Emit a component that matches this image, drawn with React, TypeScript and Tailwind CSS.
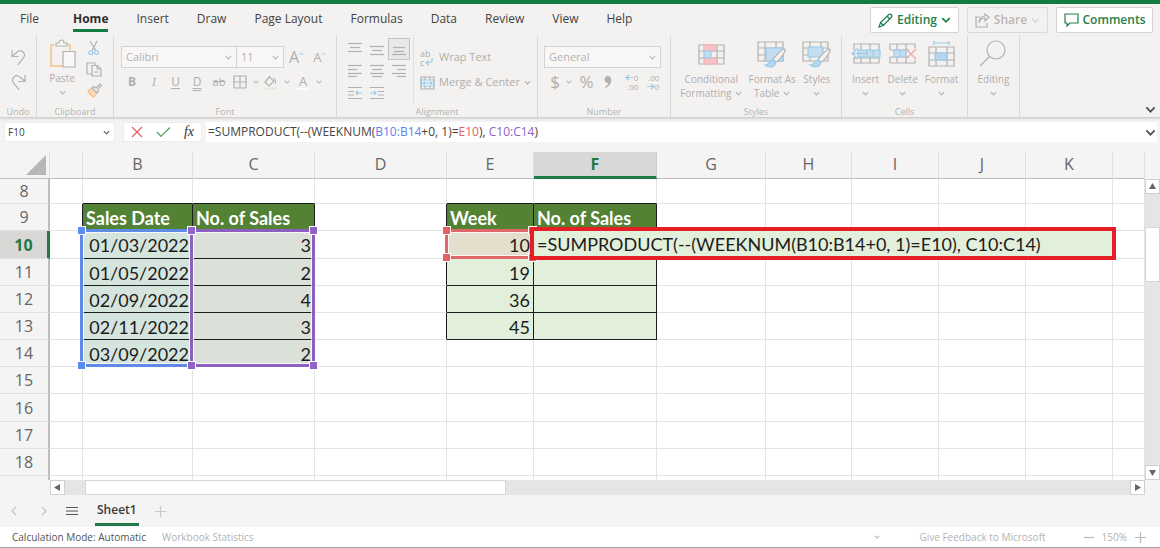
import React from 'react';

const GRAY = '#b3b1af';
const BLUE = '#9cc9e8';

const Svg = ({ w, h, children, stroke = GRAY }: { w: number; h: number; children: React.ReactNode; stroke?: string }) => (
  <svg width={w} height={h} viewBox={`0 0 ${w} ${h}`} fill="none" stroke={stroke} strokeWidth="1.2" className="shrink-0" aria-hidden="true">
    {children}
  </svg>
);

const Chevron = ({ size = 7, color = '#b7b5b3' }: { size?: number; color?: string }) => (
  <svg width={size} height={size} viewBox="0 0 8 8" fill="none" stroke={color} strokeWidth="1.4" className="shrink-0" aria-hidden="true">
    <path d="M1 2.5 L4 5.5 L7 2.5" />
  </svg>
);

const Lines = ({ rows }: { rows: [number, number, number][] }) => (
  <Svg w={14} h={14}>
    {rows.map(([x1, x2, y]) => (
      <path key={y} d={`M${x1} ${y} H${x2}`} />
    ))}
  </Svg>
);

type GroupProps = { label: string; className: string; children: React.ReactNode };

const Group = ({ label, className, children }: GroupProps) => (
  <section className={`flex shrink-0 flex-col border-r border-[#dad8d6] ${className}`}>
    <div className="flex h-[68px] justify-center">{children}</div>
    <div className="h-3 pt-px text-center text-[9px] leading-[14px] text-[#b4b2b0]">{label}</div>
  </section>
);

const BigButton = ({ lines, children, className = '' }: { lines: string[]; children: React.ReactNode; className?: string }) => (
  <button type="button" className={`flex flex-col items-center whitespace-nowrap text-[10px] leading-[14px] text-[#b0aeac] ${className}`}>
    <span className="flex h-9 items-center justify-center">{children}</span>
    <span>{lines[0]}</span>
    <span className="flex h-[14px] items-center gap-1">
      {lines[1]}
      <Chevron />
    </span>
  </button>
);

const IconButton = ({ label, children, className = '' }: { label: string; children: React.ReactNode; className?: string }) => (
  <button type="button" aria-label={label} className={`flex shrink-0 items-center justify-center ${className}`}>
    {children}
  </button>
);

const Dropdown = ({ label, value, className }: { label: string; value: string; className: string }) => (
  <label className={`relative flex h-[22px] items-center border border-[#d6d4d2] bg-[#f8f7f6] ${className}`}>
    <select aria-label={label} className="h-full w-full appearance-none bg-transparent pl-1 text-[11px] text-[#b4b2b0] outline-none">
      <option>{value}</option>
    </select>
    <span className="pointer-events-none absolute right-1">
      <Chevron />
    </span>
  </label>
);

const GridLines = () => <path d="M1 1 H26 V20 H1 Z M1 7 H26 M1 14 H26 M8 1 V20 M19 1 V20" />;

const Brush = () => (
  <>
    <path d="M28 8 C25 8 17 16 16 19 L19 21 C22 20 29 11 28 8 Z" fill="#f3f2f1" />
    <path d="M16 19 C12 19 13 24 8 24 C12 27 18 27 19 21 Z" fill="#b5d7ee" stroke={BLUE} />
  </>
);

const TABS = ['File', 'Home', 'Insert', 'Draw', 'Page Layout', 'Formulas', 'Data', 'Review', 'View', 'Help'];

const MenuBar = () => (
  <header className="flex h-8 items-start justify-between pl-5 pr-[7px]">
    <nav className="flex gap-7 text-[12px] leading-[30px] text-[#444240]">
      {TABS.map((tab) => (
        <a
          key={tab}
          href={`#${tab}`}
          className={tab === 'Home' ? 'ml-[6px] h-7 border-b-3 border-[#107c41] font-bold text-[#302f2e]' : 'h-7'}
        >
          {tab}
        </a>
      ))}
    </nav>
    <div className="flex gap-2 pt-[3px] text-[12px] font-semibold">
      <button type="button" className="flex h-[26px] w-[89px] items-center justify-center gap-1 rounded-xs border border-[#d5d3d1] bg-white text-[#1f8049]">
        <Svg w={15} h={15} stroke="#1f8049">
          <path d="M1 14 L2.5 9.5 L10.5 1.8 C12.5 0 15 2.5 13.2 4.5 L5.3 12.5 Z M2.5 9.5 L5.3 12.5 M9 3.3 L11.8 6" />
        </Svg>
        Editing
        <Chevron size={10} color="#1f8049" />
      </button>
      <button type="button" disabled className="flex h-[26px] w-[81px] items-center justify-center gap-1 rounded-xs border border-[#dcdad8] text-[#b9b7b5]">
        <Svg w={15} h={15}>
          <path d="M5 4 H1 V14 H12 V10 M4 10 C5 6 7 5 10 5 V8 L14 4 L10 1 V3 C6 3 4 6 4 10 Z" />
        </Svg>
        Share
        <Chevron size={9} color="#d5d3d1" />
      </button>
      <button type="button" className="flex h-[26px] w-[97px] items-center justify-center gap-1 rounded-xs border border-[#d5d3d1] bg-white text-[#1f8049]">
        <Svg w={15} h={14} stroke="#1f8049">
          <path d="M1 1 H14 V10 H6 L3 13 V10 H1 Z" />
        </Svg>
        Comments
      </button>
    </div>
  </header>
);

const ClipboardGroup = () => (
  <Group label="Clipboard" className="w-[77px]">
    <div className="flex gap-[10px]">
      <button type="button" className="flex flex-col items-center pt-px text-[10px] leading-[14px] text-[#b0aeac]">
        <Svg w={28} h={34}>
          <path d="M6 8 H3 V29 H15 M18 8 H22 V13" stroke="#f3cf9f" strokeWidth="2" />
          <path d="M8 9 V6 H11 C11 2 16 2 16 6 H19 V9 Z M15 14.5 H27 V30 H15 Z" fill="#f8f7f6" />
        </Svg>
        Paste
        <span className="mt-1">
          <Chevron />
        </span>
      </button>
      <div className="flex flex-col items-center gap-[6px] pt-[5px]">
        <IconButton label="Cut">
          <Svg w={12} h={15}>
            <path d="M2 0 L8 10 M9 0 L4 10" />
            <circle cx="2.8" cy="11.5" r="2" stroke={BLUE} />
            <circle cx="8.5" cy="11.5" r="2" stroke={BLUE} />
          </Svg>
        </IconButton>
        <IconButton label="Copy">
          <Svg w={16} h={15}>
            <path d="M6 12 H1 V1 H9 V3 M6 3.5 H11 L15 7 V14 H6 Z M11 3.5 V7 H15 M8.5 10 H12.5" />
          </Svg>
        </IconButton>
        <IconButton label="Format Painter">
          <Svg w={15} h={15}>
            <path d="M1 8 L5 5 L10 10 L7 14 C5 13 2 11 1 8 Z" stroke="#efc08b" fill="#f7dcbc" />
            <path d="M5 5 L7 3.5 L9 5 L13 1 L14.5 2.5 L10.5 6.5 L11.5 8.5 L10 10 Z" fill="#f3f2f1" />
          </Svg>
        </IconButton>
      </div>
    </div>
  </Group>
);

const FontGroup = () => (
  <Group label="Font" className="w-[223px]">
    <div className="flex w-full flex-col gap-[2px] pl-[7px] pt-[10px] text-[#b0aeac]">
      <div className="flex items-center">
        <Dropdown label="Font" value="Calibri" className="w-[116px]" />
        <Dropdown label="Font size" value="11" className="w-[47px] border-l-0" />
        <IconButton label="Grow font" className="ml-[5px] h-5 text-[16px] leading-5">
          A
          <svg width="5" height="10" viewBox="0 0 5 10" fill="none" stroke={BLUE}><path d="M0.5 3 L2.5 1 L4.5 3" /></svg>
        </IconButton>
        <IconButton label="Shrink font" className="ml-[9px] h-5 text-[13px] leading-5">
          A
          <svg width="5" height="10" viewBox="0 0 5 10" fill="none" stroke={BLUE}><path d="M0.5 1 L2.5 3 L4.5 1" /></svg>
        </IconButton>
      </div>
      <div className="flex h-6 items-center text-[12px]">
        <button type="button" className="w-[22px] font-bold">B</button>
        <button type="button" className="w-[22px] font-serif italic">I</button>
        <button type="button" className="w-[21px] underline underline-offset-2">U</button>
        <button type="button" className="w-[22px] underline decoration-double underline-offset-2">D</button>
        <button type="button" className="w-[22px] text-[11px] line-through">ab</button>
        <IconButton label="Borders" className="w-[31px] gap-[6px]">
          <Svg w={14} h={14}>
            <path d="M1 1 H13 V13 H1 Z M7 1 V13 M1 7 H13" />
          </Svg>
          <Chevron size={6} />
        </IconButton>
        <IconButton label="Fill colour" className="w-8 gap-[6px]">
          <Svg w={14} h={15}>
            <path d="M6 1 L1 7 L5 11 L10 6 L5 2" />
            <path d="M9 3 C12 4 12 6 11.5 9" stroke={BLUE} />
            <path d="M0 13.5 H13" stroke="#e2ecdd" strokeWidth="2" />
          </Svg>
          <Chevron size={6} />
        </IconButton>
        <IconButton label="Font colour" className="w-8 gap-[6px]">
          <span className="w-[14px] border-b-2 border-[#fbfbfb] text-[13px] leading-[14px]">A</span>
          <Chevron size={6} />
        </IconButton>
      </div>
    </div>
  </Group>
);

const ALIGNMENTS: { name: string; rows: [number, number, number][] }[] = [
  { name: 'Top align', rows: [[0, 14, 1.5], [2, 12, 5.5], [0, 14, 9.5]] },
  { name: 'Middle align', rows: [[0, 14, 4.5], [2, 12, 8.5], [0, 14, 12.5]] },
  { name: 'Bottom align', rows: [[1, 13, 5.5], [2, 12, 9.5], [0, 14, 12.5]] },
  { name: 'Align left', rows: [[0, 14, 1.5], [0, 9, 5.5], [0, 14, 9.5], [0, 9, 12.5]] },
  { name: 'Centre', rows: [[0, 14, 1.5], [2, 12, 5.5], [0, 14, 9.5], [2, 12, 12.5]] },
  { name: 'Align right', rows: [[0, 14, 1.5], [5, 14, 5.5], [0, 14, 9.5], [5, 14, 12.5]] },
];

const AlignmentGroup = () => (
  <Group label="Alignment" className="w-[201px]">
    <div className="flex w-full">
      <div className="grid w-[77px] grid-cols-[22px_22px_22px] grid-rows-[22px_22px_22px] border-r border-[#e2e0de] pl-[7px] pt-[2px]">
        {ALIGNMENTS.map(({ name, rows }) => (
          <IconButton key={name} label={name} className={name === 'Bottom align' ? 'border border-[#c6c4c2] bg-[#e9e8e7]' : ''}>
            <Lines rows={rows} />
          </IconButton>
        ))}
        <IconButton label="Decrease indent">
          <Svg w={14} h={14}>
            <path d="M0 1.5 H14 M0 5.5 H6 M0 9 H6 M0 12.5 H14" />
            <path d="M14 7 H8 M10 5 L8 7 L10 9" stroke={BLUE} />
          </Svg>
        </IconButton>
        <IconButton label="Increase indent">
          <Svg w={14} h={14}>
            <path d="M0 1.5 H14 M8 5.5 H14 M8 9 H14 M0 12.5 H14" />
            <path d="M0 7 H6 M4 5 L6 7 L4 9" stroke={BLUE} />
          </Svg>
        </IconButton>
      </div>
      <div className="flex flex-col gap-[2px] pl-[6px] pt-[10px] text-[11px] text-[#b0aeac]">
        <button type="button" className="flex h-[23px] items-center gap-1 whitespace-nowrap">
          <span className="flex w-[15px] flex-col items-start text-[9px] leading-[9px]">
            <span>ab</span>
            <span className="flex items-center gap-px">
              c
              <svg width="8" height="8" viewBox="0 0 8 8" fill="none" stroke={BLUE} strokeWidth="1.2" aria-hidden="true">
                <path d="M7 0 C8 4 5 5 1 5 M3.5 2.5 L1 5 L3.5 7.5" />
              </svg>
            </span>
          </span>
          Wrap Text
        </button>
        <button type="button" className="flex h-[23px] items-center gap-1 whitespace-nowrap">
          <Svg w={15} h={14}>
            <path d="M1 1 H14 V13 H1 Z M5 1 V4 M10 1 V4 M5 10 V13 M10 10 V13" />
            <path d="M1 4 H14 V10 H1 Z M3 7 H12 M5 5.5 L3 7 L5 8.5 M10 5.5 L12 7 L10 8.5" stroke={BLUE} />
          </Svg>
          Merge &amp; Center
          <Chevron />
        </button>
      </div>
    </div>
  </Group>
);

const NumberGroup = () => (
  <Group label="Number" className="w-[133px]">
    <div className="flex w-full flex-col gap-[2px] px-[6px] pt-[10px] text-[#b0aeac]">
      <Dropdown label="Number format" value="General" className="w-[117px]" />
      <div className="flex h-6 items-center text-[17px]">
        <IconButton label="Currency" className="w-[34px] gap-[6px]">
          <span>$</span>
          <Chevron size={6} />
        </IconButton>
        <button type="button" className="w-[17px]">%</button>
        <IconButton label="Comma style" className="w-[26px]">
          <svg width="8" height="14" viewBox="0 0 8 14" fill={GRAY} aria-hidden="true">
            <path d="M3.8 1 C6 1 7.3 2.7 7.3 5 C7.3 8.5 5 11.5 1.6 13 L1 12 C3 10.8 4 9.5 4.2 8 C2.2 8.2 0.6 6.8 0.6 4.6 C0.6 2.5 2 1 3.8 1 Z" />
          </svg>
        </IconButton>
        <IconButton label="Increase decimal" className="w-[21px]">
          <span className="flex flex-col items-end text-[8px] leading-[9px]">
            <span className="flex items-center">
              <svg width="9" height="7" viewBox="0 0 9 7" fill="none" stroke={BLUE} strokeWidth="1.2"><path d="M8 3.5 H1 M4 1 L1 3.5 L4 6" /></svg>
              0
            </span>
            <span>.00</span>
          </span>
        </IconButton>
        <IconButton label="Decrease decimal" className="w-[21px]">
          <span className="flex flex-col items-end text-[8px] leading-[9px]">
            <span>.00</span>
            <span className="flex items-center">
              <svg width="9" height="7" viewBox="0 0 9 7" fill="none" stroke={BLUE} strokeWidth="1.2"><path d="M1 3.5 H8 M5 1 L8 3.5 L5 6" /></svg>
              0
            </span>
          </span>
        </IconButton>
      </div>
    </div>
  </Group>
);

const StylesGroup = () => (
  <Group label="Styles" className="w-[171px]">
    <div className="flex gap-[6px]">
      <BigButton lines={['Conditional', 'Formatting']}>
        <Svg w={27} h={21}>
          <GridLines />
          <path d="M6 1 H17 V7 H6 Z M6 14 H19 V20 H6 Z" fill="#f6c4c6" stroke="#efafb2" />
          <path d="M6 7 H13 V14 H6 Z" fill="#c2ddf0" stroke={BLUE} />
        </Svg>
      </BigButton>
      <BigButton lines={['Format As', 'Table']}>
        <Svg w={30} h={27}>
          <GridLines />
          <path d="M9 7 H26 V20 H9 Z" fill="#c2ddf0" stroke={BLUE} />
          <Brush />
        </Svg>
      </BigButton>
      <BigButton lines={['Styles', '']}>
        <Svg w={30} h={27}>
          <GridLines />
          <path d="M6 6 H21 V16 H6 Z" fill="#c2ddf0" stroke={BLUE} />
          <Brush />
        </Svg>
      </BigButton>
    </div>
  </Group>
);

const CellsGroup = () => (
  <Group label="Cells" className="w-[126px]">
    <div className="flex gap-[7px]">
      <BigButton lines={['Insert', '']}>
        <Svg w={30} h={22}>
          <path d="M3 7 V1 H28 V7 M3 14 V20 H28 V14 M10 1 V20 M19 1 V20 M3 15 H28" />
          <path d="M7 7 H29 V14 H7 Z M16 7 V14 M22 7 V14" fill="#c2ddf0" stroke={BLUE} />
          <path d="M16 10.5 H1 M7 5 L1 10.5 L7 16" stroke={BLUE} />
        </Svg>
      </BigButton>
      <BigButton lines={['Delete', '']}>
        <Svg w={28} h={22}>
          <path d="M1 7 V1 H26 V5 M1 14 V20 H26 V17 M8 1 V7 M17 1 V7 M8 14 V20 M17 14 V20 M1 7 H20 M1 14 H20" />
          <path d="M5 7 H17 V14 H5 Z M11 7 V14" fill="#c2ddf0" stroke={BLUE} />
          <path d="M17 6 L27 16 M27 6 L17 16" stroke="#f0aaa9" strokeWidth="1.4" />
        </Svg>
      </BigButton>
      <BigButton lines={['Format', '']}>
        <svg width="27" height="26" viewBox="0 -5 27 26" fill="none" stroke={GRAY} strokeWidth="1.2">
          <GridLines />
          <path d="M7 7 H19 V14 H7 Z" fill="#b5d7ee" stroke={BLUE} />
          <path d="M6 -3 H21 M6 -5 V-1 M21 -5 V-1" stroke={BLUE} />
        </svg>
      </BigButton>
    </div>
  </Group>
);

const Ribbon = () => (
  <div className="flex h-[82px] border-b border-[#d2d0ce] shadow-sm">
    <Group label="Undo" className="w-[37px]">
      <div className="flex flex-col gap-[7px] pt-3">
        <IconButton label="Undo">
          <Svg w={17} h={18}>
            <path d="M2 2 V8.5 H8.5 M2 8.5 L7 4 C11 0.5 16 5 14 9 C13 11 10 14 8 17" />
          </Svg>
        </IconButton>
        <IconButton label="Redo">
          <Svg w={17} h={18}>
            <path d="M15 2 V8.5 H8.5 M15 8.5 L10 4 C6 0.5 1 5 3 9 C4 11 7 14 9 17" />
          </Svg>
        </IconButton>
      </div>
    </Group>
    <ClipboardGroup />
    <FontGroup />
    <AlignmentGroup />
    <NumberGroup />
    <StylesGroup />
    <CellsGroup />
    <Group label="" className="w-[52px]">
      <BigButton lines={['Editing', '']}>
        <Svg w={28} h={28}>
          <circle cx="17" cy="10" r="9" />
          <path d="M10.5 16.5 L1 26" />
        </Svg>
      </BigButton>
    </Group>
    <IconButton label="Collapse ribbon" className="mb-[2px] ml-auto mr-1 self-end">
      <Chevron size={11} color="#555" />
    </IconButton>
  </div>
);

const FormulaBar = () => (
  <div className="flex h-[34px] items-start gap-1 pl-1 pr-[4px] pt-1">
    <label className="relative mr-1 flex h-5 w-[111px] items-center border border-[#ececec] bg-white">
      <input aria-label="Name box" defaultValue="F10" className="w-full bg-transparent pl-[3px] text-[10px] text-[#444] outline-none" />
      <span className="absolute right-1">
        <Chevron color="#666" />
      </span>
    </label>
    <div className="flex h-5 w-[79px] items-center justify-between border border-[#ececec] bg-white px-[7px]">
      <IconButton label="Cancel">
        <Svg w={12} h={12} stroke="#e8605c">
          <path d="M1 1 L11 11 M11 1 L1 11" />
        </Svg>
      </IconButton>
      <IconButton label="Enter">
        <Svg w={15} h={12} stroke="#4fa564">
          <path d="M1 6 L5 10.5 L14 1.5" />
        </Svg>
      </IconButton>
      <button type="button" className="font-['Liberation_Serif',serif] text-[14px] italic leading-4 text-[#333]">fx</button>
    </div>
    <div
      role="textbox"
      aria-label="Formula"
      contentEditable
      suppressContentEditableWarning
      className="h-5 flex-1 whitespace-pre bg-white pl-[2px] text-[12px] leading-5 text-[#444] outline-none"
    >
      =SUMPRODUCT(--(WEEKNUM(<span className="text-[#5b82ea]">B10:B14</span>+0, 1)=<span className="text-[#e8605c]">E10</span>), <span className="text-[#8f62c4]">C10:C14</span>)
    </div>
    <IconButton label="Expand formula bar" className="-ml-4 h-5">
      <Chevron size={11} color="#555" />
    </IconButton>
  </div>
);

const COLUMNS = [
  { name: 'A', width: 33 },
  { name: 'B', width: 110 },
  { name: 'C', width: 122 },
  { name: 'D', width: 132 },
  { name: 'E', width: 87 },
  { name: 'F', width: 123 },
  { name: 'G', width: 109 },
  { name: 'H', width: 86 },
  { name: 'I', width: 87 },
  { name: 'J', width: 87 },
  { name: 'K', width: 87 },
  { name: '', width: 0 },
];

const ROWS = [
  { n: 8, height: 25 },
  { n: 9, height: 27 },
  { n: 10, height: 28 },
  { n: 11, height: 27 },
  { n: 12, height: 27 },
  { n: 13, height: 27 },
  { n: 14, height: 27 },
  { n: 15, height: 27 },
  { n: 16, height: 28 },
  { n: 17, height: 27 },
  { n: 18, height: 27 },
];

const CELLS: Record<string, string> = {
  B9: 'Sales Date', C9: 'No. of Sales', E9: 'Week', F9: 'No. of Sales',
  B10: '01/03/2022', B11: '01/05/2022', B12: '02/09/2022', B13: '02/11/2022', B14: '03/09/2022',
  C10: '3', C11: '2', C12: '4', C13: '3', C14: '2',
  E10: '10', E11: '19', E12: '36', E13: '45',
};

const isTable = (col: string, row: number) =>
  (row >= 9 && row <= 14 && (col === 'B' || col === 'C')) || (row >= 9 && row <= 13 && (col === 'E' || col === 'F'));

const cellClass = (index: number, row: number) => {
  const col = COLUMNS[index].name;
  const next = COLUMNS[index + 1]?.name ?? '';
  const inside = isTable(col, row);
  const right = inside || isTable(next, row) ? 'border-r-[#1d1d1d]' : 'border-r-[#e4e4e4]';
  const bottom = inside || isTable(col, row + 1) ? 'border-b-[#1d1d1d]' : 'border-b-[#e4e4e4]';
  let fill = 'bg-white';
  if (inside && row === 9) fill = 'bg-[#548235] text-left font-bold text-white';
  else if (inside && col === 'B') fill = 'bg-[#d5e4dc] text-right';
  else if (inside && col === 'C') fill = 'bg-[#dbe1d9] text-right';
  else if (inside && col === 'E' && row === 10) fill = 'bg-[#e3dfcc] text-right';
  else if (inside) fill = 'bg-[#e2efda] text-right';
  return `border-b border-r px-[3px] pt-px whitespace-nowrap ${right} ${bottom} ${fill}`;
};

const Handles = ({ color }: { color: string }) => (
  <>
    {['-left-[6px] -top-[6px]', '-right-[6px] -top-[6px]', '-left-[6px] -bottom-[6px]', '-right-[6px] -bottom-[6px]'].map((pos) => (
      <span key={pos} className={`absolute size-[9px] border border-white ${color} ${pos}`} />
    ))}
  </>
);

const Sheet = () => (
  <div className="relative min-w-0 flex-1 overflow-hidden">
    <table className="w-full table-fixed border-separate border-spacing-0 font-[Lato,sans-serif] text-[18px] leading-6 text-[#1c1c1c]">
      <colgroup>
        <col style={{ width: 50 }} />
        {COLUMNS.map((c) => (
          <col key={c.name} style={c.width ? { width: c.width } : undefined} />
        ))}
      </colgroup>
      <thead className="font-['Open_Sans',sans-serif] text-[16px] text-[#666]">
        <tr className="h-[27px]">
          <th className="border-b border-r border-b-[#bdbdbd] border-r-[#e0e0e0]" aria-label="Select all">
            <svg width="20" height="20" viewBox="0 0 20 20" className="ml-auto mr-[3px]" aria-hidden="true">
              <path d="M20 0 V20 H0 Z" fill="#b7b7b7" />
            </svg>
          </th>
          {COLUMNS.map(({ name }) => (
            <th
              key={name}
              scope="col"
              className={
                name === 'F'
                  ? 'border-b-3 border-r border-b-[#1f7a46] border-r-[#cfcfcf] bg-[#d9d8d7] leading-5 font-bold text-[#1f7a46]'
                  : 'border-b border-r border-b-[#bdbdbd] border-r-[#e0e0e0] pb-[2px] leading-5 font-normal'
              }
            >
              {name === 'A' ? '' : name}
            </th>
          ))}
        </tr>
      </thead>
      <tbody>
        {ROWS.map(({ n, height }) => (
          <tr key={n} style={{ height }}>
            <th
              scope="row"
              className={
                n === 10
                  ? "border-b border-r-3 border-b-[#e0e0e0] border-r-[#1f7a46] bg-[#d9d8d7] font-['Open_Sans',sans-serif] text-[16px] font-bold text-[#1f7a46]"
                  : "border-b border-r-2 border-b-[#e0e0e0] border-r-[#bdbdbd] font-['Open_Sans',sans-serif] text-[16px] font-normal text-[#666]"
              }
            >
              {n}
            </th>
            {COLUMNS.map(({ name }, i) => (
              <td key={name} className={cellClass(i, n)}>
                {CELLS[`${name}${n}`]}
              </td>
            ))}
          </tr>
        ))}
        <tr className="h-1">
          <th className="border-r-2 border-[#bdbdbd]" />
          {COLUMNS.map(({ name }) => (
            <td key={name} className="border-r border-[#e4e4e4] bg-white" />
          ))}
        </tr>
      </tbody>
    </table>

    {/* range highlights for the references in the formula */}
    <div className="absolute left-[80px] top-[77px] h-[138px] w-[113px] border-3 border-[#5f8ae6]">
      <div className="h-full border border-white/80" />
      <Handles color="bg-[#5b8cf0]" />
    </div>
    <div className="absolute left-[190px] top-[77px] h-[138px] w-[125px] border-3 border-[#8c5fc0]">
      <div className="h-full border border-white/80" />
      <Handles color="bg-[#9163c8]" />
    </div>
    <div className="absolute left-[445px] top-[77px] h-[30px] w-[89px] border-3 border-[#e0686a]">
      <div className="h-full border border-white/70" />
      <Handles color="bg-[#ea5f62]" />
    </div>
    <div className="absolute left-[530px] top-[75px] flex h-[33px] w-[586px] items-center whitespace-pre border-4 border-[#e61e25] bg-[#e2efda] pl-[3px] pt-[2px] font-[Lato,sans-serif] text-[18px] text-[#1c1c1c]">
      =SUMPRODUCT(--(WEEKNUM(B10:B14+0, 1)=E10), C10:C14)
    </div>
  </div>
);

const ScrollButton = ({ label, d, className = '' }: { label: string; d: string; className?: string }) => (
  <button type="button" aria-label={label} className={`flex size-[15px] shrink-0 items-center justify-center border border-[#d0d0d0] bg-white ${className}`}>
    <svg width="7" height="7" viewBox="0 0 7 7" fill="#666" aria-hidden="true">
      <path d={d} />
    </svg>
  </button>
);

const BottomBars = () => (
  <footer>
    <div className="ml-[50px] mr-[15px] flex h-[15px] bg-[#e5e5e5]">
      <ScrollButton label="Scroll left" d="M6 0 V7 L0 3.5 Z" />
      <div className="ml-5 h-full w-[421px] border border-[#d6d6d6] bg-white" />
      <ScrollButton label="Scroll right" d="M1 0 V7 L7 3.5 Z" className="ml-auto" />
    </div>
    <div className="flex h-8 items-center pl-[10px] text-[12px]">
      <IconButton label="Previous sheet">
        <Svg w={9} h={10} stroke="#c4c4c4"><path d="M6 1 L2 5 L6 9" /></Svg>
      </IconButton>
      <IconButton label="Next sheet" className="ml-5">
        <Svg w={9} h={10} stroke="#c4c4c4"><path d="M3 1 L7 5 L3 9" /></Svg>
      </IconButton>
      <IconButton label="All sheets" className="ml-[18px]">
        <Svg w={12} h={10} stroke="#555"><path d="M0 1.5 H12 M0 5 H12 M0 8.5 H12" /></Svg>
      </IconButton>
      <button type="button" className="ml-[17px] h-[30px] border-b-3 border-[#1f7a46] px-[2px] font-semibold leading-7 text-[#3b3b3b]">Sheet1</button>
      <IconButton label="New sheet" className="ml-4">
        <Svg w={11} h={11} stroke="#c8c8c8"><path d="M5.5 0 V11 M0 5.5 H11" /></Svg>
      </IconButton>
    </div>
    <div className="flex h-[21px] items-center border-b border-[#a3a3a3] bg-white pl-3 pr-[14px] text-[10px] text-[#b3b3b3]">
      <span className="text-[#555]">Calculation Mode: Automatic</span>
      <a href="#statistics" className="ml-4">Workbook Statistics</a>
      <span className="ml-auto">
        <Chevron size={6} />
      </span>
      <a href="#feedback" className="ml-[39px]">Give Feedback to Microsoft</a>
      <IconButton label="Zoom out" className="ml-[38px]">
        <Svg w={10} h={11} stroke="#b8b8b8"><path d="M0 5.5 H10" /></Svg>
      </IconButton>
      <span className="mx-2">150%</span>
      <IconButton label="Zoom in">
        <Svg w={11} h={11} stroke="#b8b8b8"><path d="M5.5 0 V11 M0 5.5 H11" /></Svg>
      </IconButton>
    </div>
  </footer>
);

export default function App() {
  return (
    <div className="min-h-screen bg-[#f4f4f4] font-['Open_Sans',sans-serif]">
      <div className="bg-[#f3f2f1]">
        <div className="h-1 bg-[#107c41]" />
        <MenuBar />
        <Ribbon />
      </div>
      <FormulaBar />
      <main className="flex">
        <Sheet />
        <div className="mt-[27px] flex w-[15px] flex-col bg-[#e5e5e5]">
          <ScrollButton label="Scroll up" d="M0 6 H7 L3.5 0 Z" />
          <div className="mt-[33px] h-[55px] border border-[#d6d6d6] bg-white" />
          <ScrollButton label="Scroll down" d="M0 1 H7 L3.5 7 Z" className="mt-auto" />
        </div>
      </main>
      <BottomBars />
    </div>
  );
}
